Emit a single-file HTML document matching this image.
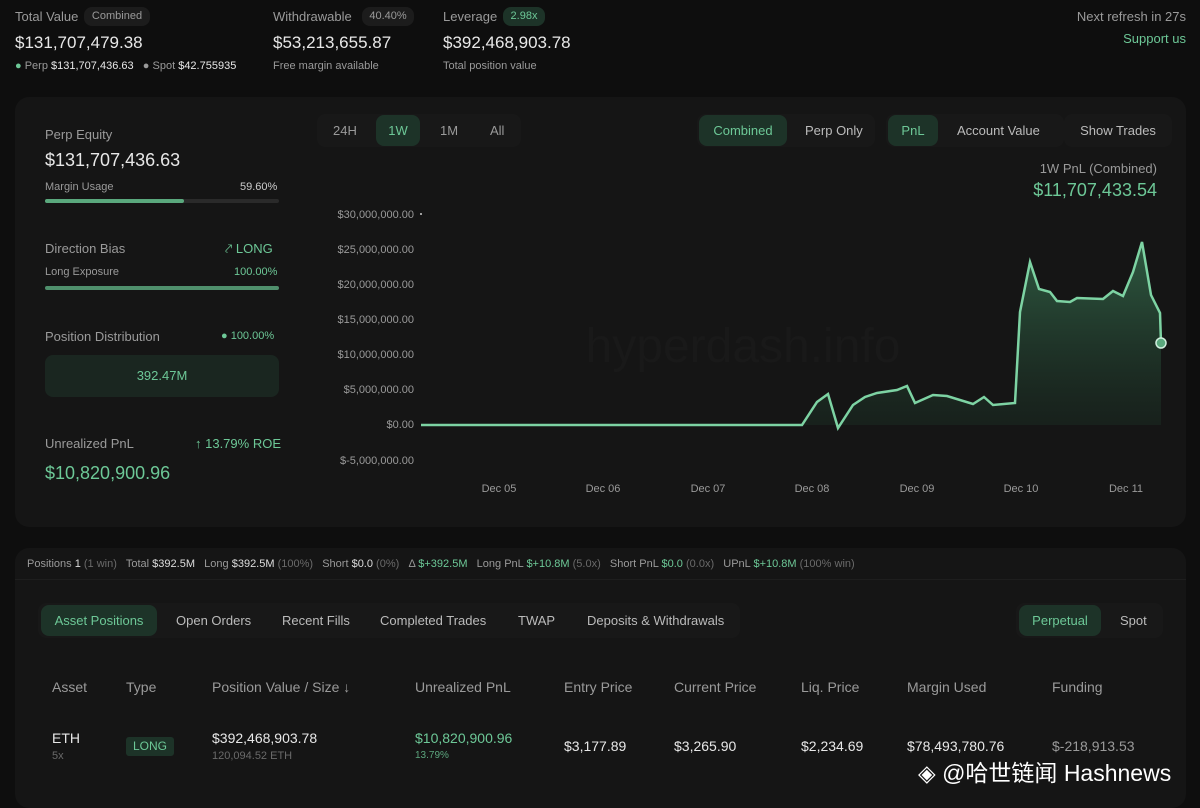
<!DOCTYPE html>
<html><head><meta charset="utf-8"><style>
*{box-sizing:border-box;margin:0;padding:0}
body{width:1200px;height:794px;background:#0e0e0e;font-family:"Liberation Sans","Noto Sans CJK SC",sans-serif;color:#e8e8e8;position:relative;overflow:hidden}
.a{position:absolute;white-space:nowrap}
.g{color:#6dc897}.m{color:#9a9a9a}.d{color:#6a6a6a}
.pill{position:absolute;border-radius:8px;background:#1c1c1c}
.gp{background:#1d3328;color:#6dc897}
.card{position:absolute;background:#151515;border-radius:14px}
.bar{position:absolute;height:4px;border-radius:2px;background:#2a2a2a}
</style></head><body>
<div class="a m" style="left:15px;top:9px;font-size:13px">Total Value</div>
<div class="pill m" style="left:84px;top:7px;width:66px;height:19px;font-size:11px;line-height:19px;text-align:center">Combined</div>
<div class="a" style="left:15px;top:33px;font-size:17px">$131,707,479.38</div>
<div class="a" style="left:15px;top:60px;font-size:11px"><span class="g">●</span> <span class="m">Perp</span> $131,707,436.63 &nbsp; <span class="m">●</span> <span class="m">Spot</span> $42.755935</div>
<div class="a m" style="left:273px;top:9px;font-size:13px">Withdrawable</div>
<div class="pill m" style="left:362px;top:7px;width:52px;height:19px;font-size:11px;line-height:19px;text-align:center">40.40%</div>
<div class="a" style="left:273px;top:33px;font-size:17px">$53,213,655.87</div>
<div class="a m" style="left:273px;top:60px;font-size:11px">Free margin available</div>
<div class="a m" style="left:443px;top:9px;font-size:13px">Leverage</div>
<div class="pill gp" style="left:503px;top:7px;width:42px;height:19px;font-size:11px;line-height:19px;text-align:center">2.98x</div>
<div class="a" style="left:443px;top:33px;font-size:17px">$392,468,903.78</div>
<div class="a m" style="left:443px;top:60px;font-size:11px">Total position value</div>
<div class="a m" style="right:14px;top:9px;font-size:13px">Next refresh in 27s</div>
<div class="a g" style="right:14px;top:31px;font-size:13px">Support us</div>

<div class="card" style="left:15px;top:97px;width:1171px;height:430px"></div>
<div class="a m" style="left:45px;top:127px;font-size:13px">Perp Equity</div>
<div class="a" style="left:45px;top:150px;font-size:18px">$131,707,436.63</div>
<div class="a m" style="left:45px;top:181px;font-size:11px">Margin Usage</div>
<div class="a" style="left:240px;top:181px;font-size:11px;color:#ccc">59.60%</div>
<div class="bar" style="left:45px;top:199px;width:234px"></div>
<div class="bar" style="left:45px;top:199px;width:139px;background:#5aa87d"></div>
<div class="a m" style="left:45px;top:241px;font-size:13px">Direction Bias</div>
<div class="a g" style="left:225px;top:241px;font-size:13px">⤤ LONG</div>
<div class="a m" style="left:45px;top:266px;font-size:11px">Long Exposure</div>
<div class="a g" style="left:234px;top:266px;font-size:11px">100.00%</div>
<div class="bar" style="left:45px;top:286px;width:234px;background:#4f8f6c"></div>
<div class="a m" style="left:45px;top:329px;font-size:13px">Position Distribution</div>
<div class="a g" style="left:221px;top:330px;font-size:11px">● 100.00%</div>
<div class="a g" style="left:45px;top:355px;width:234px;height:42px;border-radius:8px;background:#1a2620;font-size:13px;line-height:42px;text-align:center">392.47M</div>
<div class="a m" style="left:45px;top:436px;font-size:13px">Unrealized PnL</div>
<div class="a g" style="left:195px;top:436px;font-size:13px">↑ 13.79% ROE</div>
<div class="a g" style="left:45px;top:463px;font-size:18px">$10,820,900.96</div>

<div class="pill" style="left:317px;top:114px;width:204px;height:33px;background:#181818"></div>
<div class="a m" style="left:333px;top:123px;font-size:13px">24H</div>
<div class="pill gp" style="left:376px;top:115px;width:44px;height:31px;font-size:13px;line-height:31px;text-align:center">1W</div>
<div class="a m" style="left:440px;top:123px;font-size:13px">1M</div>
<div class="a m" style="left:490px;top:123px;font-size:13px">All</div>
<div class="pill" style="left:697px;top:114px;width:178px;height:33px;background:#181818"></div>
<div class="pill gp" style="left:699px;top:115px;width:88px;height:31px;font-size:13px;line-height:31px;text-align:center">Combined</div>
<div class="a m" style="left:805px;top:123px;font-size:13px;color:#bbb">Perp Only</div>
<div class="pill" style="left:886px;top:114px;width:178px;height:33px;background:#181818"></div>
<div class="pill gp" style="left:888px;top:115px;width:50px;height:31px;font-size:13px;line-height:31px;text-align:center">PnL</div>
<div class="a" style="left:957px;top:123px;font-size:13px;color:#bbb">Account Value</div>
<div class="pill" style="left:1064px;top:114px;width:108px;height:33px;background:#181818;font-size:13px;line-height:33px;text-align:center;color:#bbb">Show Trades</div>
<div class="a m" style="right:43px;top:161px;font-size:13px">1W PnL (Combined)</div>
<div class="a g" style="right:43px;top:180px;font-size:18px">$11,707,433.54</div>

<svg class="a" style="left:0;top:0" width="1200" height="540">
<g font-family="Liberation Sans" font-size="11" fill="#9a9a9a" text-anchor="end">
<text x="414" y="218">$30,000,000.00</text><text x="414" y="253">$25,000,000.00</text><text x="414" y="288">$20,000,000.00</text><text x="414" y="323">$15,000,000.00</text><text x="414" y="358">$10,000,000.00</text><text x="414" y="393">$5,000,000.00</text><text x="414" y="428">$0.00</text><text x="414" y="464">$-5,000,000.00</text>
</g>
<g font-family="Liberation Sans" font-size="11" fill="#9a9a9a" text-anchor="middle">
<text x="499" y="492">Dec 05</text><text x="603" y="492">Dec 06</text><text x="708" y="492">Dec 07</text><text x="812" y="492">Dec 08</text><text x="917" y="492">Dec 09</text><text x="1021" y="492">Dec 10</text><text x="1126" y="492">Dec 11</text>
</g>
<text x="743" y="362" font-family="Liberation Sans" font-size="48" fill="#191919" text-anchor="middle">hyperdash.info</text>
<defs><linearGradient id="gr" x1="0" y1="0" x2="0" y2="1"><stop offset="0" stop-color="#3b7a56" stop-opacity=".7"/><stop offset="1" stop-color="#1d3a2a" stop-opacity=".3"/></linearGradient></defs>
<path d="M421,425 L802,425 L817,402 L828,394 L838,428 L853,405 L865,397 L877,393 L897,390 L907,386 L915,403 L933,395 L947,396 L973,404 L984,397 L993,405 L1015,403 L1020,312 L1030,262 L1039,289 L1050,292 L1057,301 L1070,302 L1077,298 L1103,299 L1113,291 L1123,296 L1133,272 L1142,242 L1151,295 L1160,313 L1161,343 L1161,425 Z" fill="url(#gr)"/>
<path d="M421,425 L802,425 L817,402 L828,394 L838,428 L853,405 L865,397 L877,393 L897,390 L907,386 L915,403 L933,395 L947,396 L973,404 L984,397 L993,405 L1015,403 L1020,312 L1030,262 L1039,289 L1050,292 L1057,301 L1070,302 L1077,298 L1103,299 L1113,291 L1123,296 L1133,272 L1142,242 L1151,295 L1160,313 L1161,343" fill="none" stroke="#7dd3a3" stroke-width="2.5"/>
<circle cx="1161" cy="343" r="5" fill="#5aa87d" stroke="#cfeedd" stroke-width="1.5"/>
<circle cx="421" cy="214" r="1" fill="#ccc"/>
</svg>

<div class="card" style="left:15px;top:548px;width:1171px;height:260px"></div>
<div class="a" style="left:27px;top:558px;font-size:11px;color:#ddd"><span class="m">Positions</span> 1 <span class="d">(1 win)</span> &nbsp; <span class="m">Total</span> $392.5M &nbsp; <span class="m">Long</span> $392.5M <span class="d">(100%)</span> &nbsp; <span class="m">Short</span> $0.0 <span class="d">(0%)</span> &nbsp; <span class="m">Δ</span> <span class="g">$+392.5M</span> &nbsp; <span class="m">Long PnL</span> <span class="g">$+10.8M</span> <span class="d">(5.0x)</span> &nbsp; <span class="m">Short PnL</span> <span class="g">$0.0</span> <span class="d">(0.0x)</span> &nbsp; <span class="m">UPnL</span> <span class="g">$+10.8M</span> <span class="d">(100% win)</span></div>
<div class="a" style="left:15px;top:579px;width:1171px;height:1px;background:#1e1e1e"></div>
<div class="pill" style="left:38px;top:603px;width:702px;height:35px;background:#181818"></div>
<div class="pill gp" style="left:41px;top:605px;width:116px;height:31px;font-size:13px;line-height:31px;text-align:center">Asset Positions</div>
<div class="a" style="left:176px;top:613px;font-size:13px;color:#bbb">Open Orders</div>
<div class="a" style="left:282px;top:613px;font-size:13px;color:#bbb">Recent Fills</div>
<div class="a" style="left:380px;top:613px;font-size:13px;color:#bbb">Completed Trades</div>
<div class="a" style="left:518px;top:613px;font-size:13px;color:#bbb">TWAP</div>
<div class="a" style="left:587px;top:613px;font-size:13px;color:#bbb">Deposits &amp; Withdrawals</div>
<div class="pill" style="left:1016px;top:603px;width:147px;height:35px;background:#181818"></div>
<div class="pill gp" style="left:1019px;top:605px;width:82px;height:31px;font-size:13px;line-height:31px;text-align:center">Perpetual</div>
<div class="a" style="left:1120px;top:613px;font-size:13px;color:#bbb">Spot</div>
<div class="a m" style="left:52px;top:679px;font-size:14px">Asset</div>
<div class="a m" style="left:126px;top:679px;font-size:14px">Type</div>
<div class="a m" style="left:212px;top:679px;font-size:14px">Position Value / Size ↓</div>
<div class="a m" style="left:415px;top:679px;font-size:14px">Unrealized PnL</div>
<div class="a m" style="left:564px;top:679px;font-size:14px">Entry Price</div>
<div class="a m" style="left:674px;top:679px;font-size:14px">Current Price</div>
<div class="a m" style="left:801px;top:679px;font-size:14px">Liq. Price</div>
<div class="a m" style="left:907px;top:679px;font-size:14px">Margin Used</div>
<div class="a m" style="left:1052px;top:679px;font-size:14px">Funding</div>
<div class="a" style="left:52px;top:730px;font-size:14px">ETH</div>
<div class="a d" style="left:52px;top:750px;font-size:11px">5x</div>
<div class="pill gp" style="left:126px;top:737px;width:48px;height:19px;border-radius:3px;font-size:12px;line-height:19px;text-align:center">LONG</div>
<div class="a" style="left:212px;top:730px;font-size:14px">$392,468,903.78</div>
<div class="a d" style="left:212px;top:750px;font-size:11px">120,094.52 ETH</div>
<div class="a g" style="left:415px;top:730px;font-size:14px">$10,820,900.96</div>
<div class="a g" style="left:415px;top:750px;font-size:10px;opacity:.8">13.79%</div>
<div class="a" style="left:564px;top:738px;font-size:14px">$3,177.89</div>
<div class="a" style="left:674px;top:738px;font-size:14px">$3,265.90</div>
<div class="a" style="left:801px;top:738px;font-size:14px">$2,234.69</div>
<div class="a" style="left:907px;top:738px;font-size:14px">$78,493,780.76</div>
<div class="a m" style="left:1052px;top:738px;font-size:14px">$-218,913.53</div>
<div class="a" style="left:918px;top:754px;font-size:23px;color:#fff">◈ @哈世链闻 Hashnews</div>
</body></html>
